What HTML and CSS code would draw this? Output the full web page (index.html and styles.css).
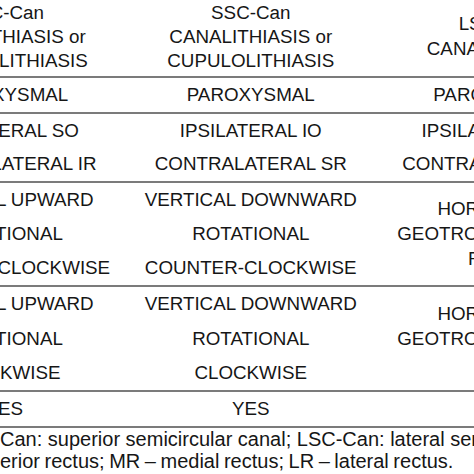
FILE: index.html
```html
<!DOCTYPE html>
<html lang="en">
<head>
<meta charset="utf-8">
<title>BPPV nystagmus table</title>
<link rel="stylesheet" href="styles.css">
</head>
<body>
<div class="page">
  <div class="table">
    <div class="sec head">
      <div class="cell"><span>PSC-Can</span><span>CANALITHIASIS or</span><span>CUPULOLITHIASIS</span></div>
      <div class="cell"><span>SSC-Can</span><span>CANALITHIASIS or</span><span>CUPULOLITHIASIS</span></div>
      <div class="cell narrow"><span>LSC-Can</span><span>CANALITHIASIS</span></div>
    </div>
    <div class="sec one">
      <div class="cell"><span>PAROXYSMAL</span></div>
      <div class="cell"><span>PAROXYSMAL</span></div>
      <div class="cell"><span>PAROXYSMAL</span></div>
    </div>
    <div class="sec two">
      <div class="cell"><span>IPSILATERAL SO</span><span>CONTRALATERAL IR</span></div>
      <div class="cell"><span>IPSILATERAL IO</span><span>CONTRALATERAL SR</span></div>
      <div class="cell"><span>IPSILATERAL MR</span><span>CONTRALATERAL LR</span></div>
    </div>
    <div class="sec three">
      <div class="cell"><span>VERTICAL UPWARD</span><span>ROTATIONAL</span><span>COUNTER-CLOCKWISE</span></div>
      <div class="cell"><span>VERTICAL DOWNWARD</span><span>ROTATIONAL</span><span>COUNTER-CLOCKWISE</span></div>
      <div class="cell tight"><span>HORIZONTAL</span><span>GEOTROPIC TOWARD</span><span>RIGHT</span></div>
    </div>
    <div class="sec three">
      <div class="cell"><span>VERTICAL UPWARD</span><span>ROTATIONAL</span><span>CLOCKWISE</span></div>
      <div class="cell"><span>VERTICAL DOWNWARD</span><span>ROTATIONAL</span><span>CLOCKWISE</span></div>
      <div class="cell tight"><span>HORIZONTAL</span><span>GEOTROPIC TOWARD</span><span>LEFT</span></div>
    </div>
    <div class="sec one last">
      <div class="cell"><span>YES</span></div>
      <div class="cell"><span>YES</span></div>
      <div class="cell"><span>YES</span></div>
    </div>
  </div>
  <div class="note">
    <p class="line">Can: superior semicircular canal; LSC-Can: lateral semicircular canal;</p>
    <p class="line tightwords">erior rectus; MR – medial rectus; LR – lateral rectus.</p>
  </div>
</div>
</body>
</html>
```
FILE: styles.css
```css
html, body {
  margin: 0;
  padding: 0;
  overflow: hidden;
  background: #ffffff;
}

body {
  width: 474px;
  height: 474px;
  font-family: "Liberation Sans", Arial, sans-serif;
  color: #161616;
}

.page {
  width: 474px;
  height: 474px;
  overflow: hidden;
}

.table {
  margin-left: -119px;
  width: 739.5px;
  font-size: 18.8px;
}

.sec {
  display: grid;
  grid-template-columns: repeat(3, 246.5px);
}

.sec + .sec {
  border-top: 2px solid #7b7b7b;
}

.sec.last {
  border-bottom: 2px solid #7b7b7b;
}

.cell {
  display: flex;
  flex-direction: column;
  justify-content: center;
  align-items: center;
  text-align: center;
  white-space: nowrap;
}

.head {
  height: 76px;
  padding-bottom: 3px;
  box-sizing: border-box;
  line-height: 24px;
}

.head .narrow {
  line-height: 24.5px;
}

.one .cell,
.two .cell {
  line-height: 33.5px;
}

.three .cell {
  line-height: 34.33px;
}

.three .cell.tight {
  line-height: 25px;
}

.note {
  font-size: 20px;
  line-height: 22px;
  white-space: nowrap;
}

.line {
  margin: 0;
}

.tightwords {
  word-spacing: -1px;
}
```
